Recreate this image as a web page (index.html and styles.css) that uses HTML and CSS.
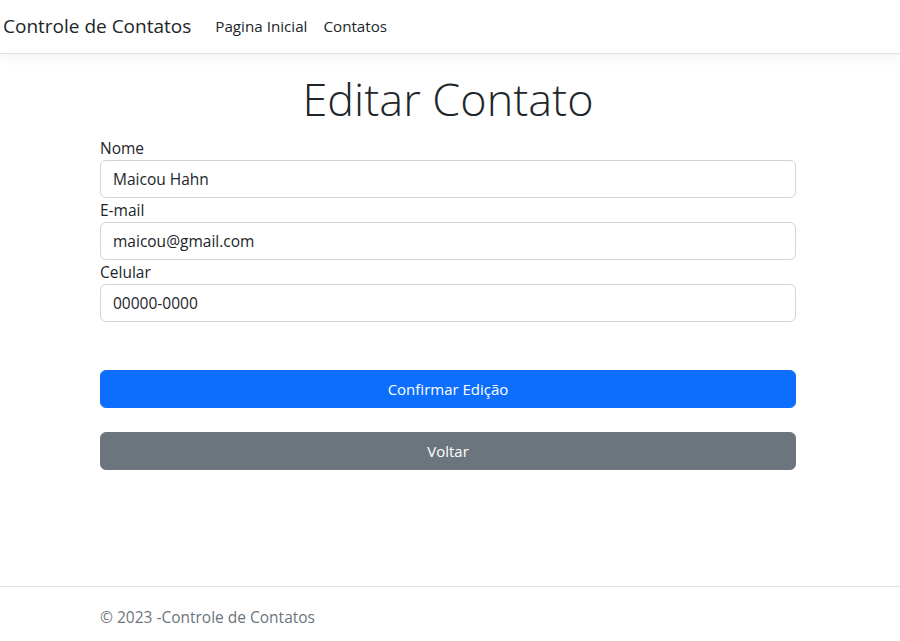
FILE: index.html
```html
<!DOCTYPE html>
<html lang="pt-br">
<head>
<meta charset="utf-8">
<title>Editar Contato - Controle de Contatos</title>
<link rel="stylesheet" href="styles.css">
</head>
<body>
<header class="navbar">
  <a class="brand" href="#">Controle de Contatos</a>
  <nav class="nav">
    <a class="nav-link" href="#">Pagina Inicial</a>
    <a class="nav-link" href="#">Contatos</a>
  </nav>
</header>
<main class="main">
  <div class="container">
    <h1 class="title">Editar Contato</h1>
    <form class="form">
      <div class="field">
        <label class="label" for="nome">Nome</label>
        <input class="input" id="nome" type="text" value="Maicou Hahn">
      </div>
      <div class="field">
        <label class="label" for="email">E-mail</label>
        <input class="input" id="email" type="text" value="maicou@gmail.com">
      </div>
      <div class="field">
        <label class="label" for="celular">Celular</label>
        <input class="input" id="celular" type="text" value="00000-0000">
      </div>
      <div class="actions">
        <button class="btn btn-primary" type="button">Confirmar Edição</button>
        <button class="btn btn-secondary" type="button">Voltar</button>
      </div>
    </form>
  </div>
</main>
<footer class="footer">
  <div class="container">© 2023 -Controle de Contatos</div>
</footer>
</body>
</html>
```
FILE: styles.css
```css
* { box-sizing: border-box; }
html, body { margin: 0; padding: 0; }
body {
  font-family: "Open Sans", "Noto Sans", sans-serif;
  font-size: 15.5px;
  line-height: 24px;
  color: #212529;
  background: #fff;
  width: 900px;
  height: 641px;
  overflow: hidden;
}
a { text-decoration: none; color: #212529; }

.navbar {
  display: flex;
  align-items: center;
  height: 54px;
  padding-left: 3px;
  border-bottom: 1px solid #dee2e6;
  box-shadow: 0 4px 12px rgba(0, 0, 0, 0.05);
}
.brand {
  font-size: 19px;
  line-height: 30px;
  margin-right: 16px;
  padding-bottom: 2px;
}
.nav { display: flex; padding-bottom: 2px; }
.nav-link { padding: 8px; line-height: 24px; font-size: 15.2px; }

.main { height: 532px; padding-top: 16px; padding-right: 4px; }
.container { max-width: 720px; margin: 0 auto; padding: 0 12px; }

.title {
  margin: 0 0 8px;
  text-align: center;
  font-size: 45px;
  font-weight: 300;
  line-height: 57.6px;
}
.form { display: flex; flex-direction: column; }
.field { display: flex; flex-direction: column; }
.label { line-height: 24px; }
.input {
  font: inherit;
  color: #212529;
  height: 38px;
  padding: 6px 12px;
  border: 1px solid #ced4da;
  border-radius: 6px;
  background: #fff;
}
.actions { display: flex; flex-direction: column; gap: 24px; margin-top: 48px; }
.btn {
  font: inherit;
  font-size: 15px;
  height: 38px;
  width: 100%;
  border: 1px solid transparent;
  border-radius: 6px;
  color: #fff;
  cursor: pointer;
}
.btn-primary { background: #0d6efd; border-color: #0d6efd; }
.btn-secondary { background: #6c757d; border-color: #6c757d; }

.footer {
  border-top: 1px solid #dee2e6;
  line-height: 60px;
  color: #6c757d;
  padding-right: 4px;
  white-space: nowrap;
}
```
